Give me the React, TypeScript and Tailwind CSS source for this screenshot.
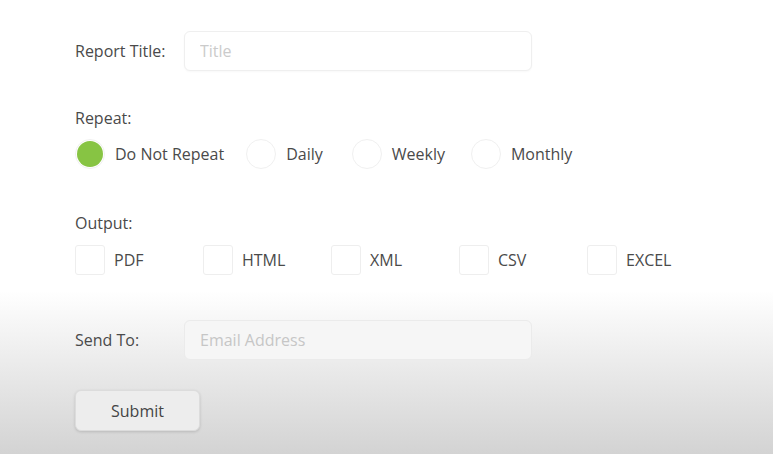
import React from "react";

const repeatOptions = [
  { label: "Do Not Repeat", space: "mr-[22px]" },
  { label: "Daily", space: "mr-[29px]" },
  { label: "Weekly", space: "mr-[26px]" },
  { label: "Monthly", space: "" },
];
const outputOptions = ["PDF", "HTML", "XML", "CSV", "EXCEL"];

const App: React.FC = () => {
  return (
    <div
      className="h-[454px] w-full overflow-hidden bg-linear-to-b from-white from-[64%] to-[#d3d3d3] text-[16px] text-[#4a4a4a]"
      style={{ fontFamily: '"Open Sans", "Liberation Sans", sans-serif' }}
    >
      <div className="pl-[75px] pt-[31px]">
        {/* Report title */}
        <div className="flex items-center">
          <label className="w-[109px] leading-5">Report Title:</label>
          <input
            placeholder="Title"
            className="h-[40px] w-[348px] rounded-md border border-[#efefef] bg-white pl-[15px] text-[16px] shadow-[0_1px_2px_rgba(0,0,0,0.03)] outline-none placeholder:text-[#cbcbcb]"
          />
        </div>

        {/* Repeat */}
        <p className="mt-[37px] leading-5">Repeat:</p>
        <div className="mt-[11px] flex items-center">
          {repeatOptions.map((opt, i) => (
            <div key={opt.label} className={`flex items-center gap-[10px] ${opt.space}`}>
              <span className="flex h-[30px] w-[30px] items-center justify-center rounded-full border border-[#f0f0f0] bg-white">
                {i === 0 && (
                  <span className="h-[26px] w-[26px] rounded-full bg-[#87c443]" />
                )}
              </span>
              <span className="leading-5">{opt.label}</span>
            </div>
          ))}
        </div>

        {/* Output */}
        <p className="mt-[44px] leading-5">Output:</p>
        <div className="mt-[12px] flex items-center">
          {outputOptions.map((opt) => (
            <div key={opt} className="flex w-[128px] items-center gap-[9px]">
              <span className="h-[30px] w-[30px] rounded-[3px] border border-[#eeeeee] bg-white" />
              <span className="leading-5">{opt}</span>
            </div>
          ))}
        </div>

        {/* Send to */}
        <div className="mt-[45px] flex items-center">
          <label className="w-[109px] leading-5">Send To:</label>
          <input
            placeholder="Email Address"
            className="h-[40px] w-[348px] rounded-md border border-[#ebebeb] bg-[#f6f6f6] pl-[15px] text-[16px] outline-none placeholder:text-[#c6c6c6]"
          />
        </div>

        <button className="mt-[30px] h-[41px] w-[125px] rounded-md border border-[#dcdcdc] bg-[#ededed] text-[16px] text-[#444] shadow-[0_1px_3px_rgba(0,0,0,0.15)]">
          Submit
        </button>
      </div>
    </div>
  );
};

export default App;
